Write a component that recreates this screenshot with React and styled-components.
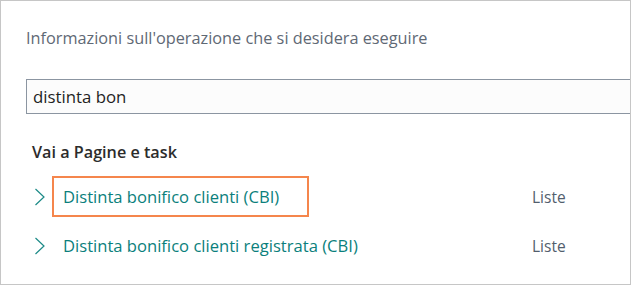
import styled, { createGlobalStyle } from 'styled-components'

const GlobalStyle = createGlobalStyle`
  html, body {
    margin: 0;
    padding: 0;
    background: #ffffff;
  }
  body {
    font-family: 'Open Sans', 'Noto Sans', Arial, sans-serif;
  }
`

const Frame = styled.div`
  width: 631px;
  height: 285px;
  box-sizing: border-box;
  border: 1px solid #c6c6c6;
  overflow: hidden;
  background: #ffffff;
  padding: 26px 0 0 25px;
`

const Title = styled.div`
  font-size: 16.3px;
  line-height: 22px;
  color: #5f6975;
  white-space: nowrap;
`

const SearchBox = styled.input`
  display: block;
  box-sizing: border-box;
  margin-top: 30px;
  width: 640px;
  height: 35px;
  padding: 0 6px;
  border: 1px solid #8b95a1;
  border-right: none;
  background: #fcfcfc;
  font-family: inherit;
  font-size: 16.8px;
  color: #1f1f1f;
  outline: none;
`

const Section = styled.div`
  padding: 27px 0 0 6px;
`

const Heading = styled.div`
  font-size: 16.2px;
  font-weight: 600;
  line-height: 22px;
  color: #2c2c2c;
`

const List = styled.div`
  display: flex;
  flex-direction: column;
  gap: 8px;
  margin-top: 13px;
`

const Row = styled.div`
  display: grid;
  grid-template-columns: 20px 480px auto;
  align-items: center;
`

const Chevron = styled.svg`
  width: 12px;
  height: 18px;
  margin-left: 2px;
`

const LinkCell = styled.div`
  display: flex;
`

const Link = styled.a`
  display: inline-flex;
  align-items: center;
  height: 41px;
  box-sizing: border-box;
  padding: 0 28px 0 9px;
  border: 2px solid ${({ highlighted }) => (highlighted ? '#f5864c' : 'transparent')};
  font-size: 16.6px;
  color: #0b7f7c;
  text-decoration: none;
  white-space: nowrap;
  cursor: pointer;
`

const Kind = styled.span`
  font-size: 15.5px;
  color: #525e6d;
`

const results = [
  { label: 'Distinta bonifico clienti (CBI)', kind: 'Liste', highlighted: true },
  { label: 'Distinta bonifico clienti registrata (CBI)', kind: 'Liste', highlighted: false }
]

const App = () => {
  return (
    <>
      <GlobalStyle />
      <Frame>
        <Title>Informazioni sull'operazione che si desidera eseguire</Title>
        <SearchBox type="text" defaultValue="distinta bon" />

        <Section>
          <Heading>Vai a Pagine e task</Heading>
          <List>
            {results.map(item => (
              <Row key={item.label}>
                <Chevron viewBox="0 0 12 18">
                  <polyline points="1.5,1 10,9 1.5,17" fill="none" stroke="#1c8a87" strokeWidth="1.2" />
                </Chevron>
                <LinkCell>
                  <Link highlighted={item.highlighted}>{item.label}</Link>
                </LinkCell>
                <Kind>{item.kind}</Kind>
              </Row>
            ))}
          </List>
        </Section>
      </Frame>
    </>
  )
}

export default App
